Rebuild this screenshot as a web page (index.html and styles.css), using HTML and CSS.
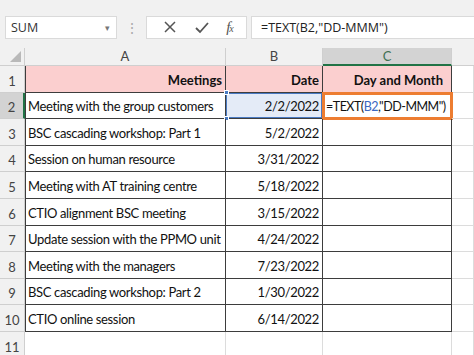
FILE: index.html
```html
<!DOCTYPE html>
<html lang="en">
<head>
  <meta charset="UTF-8">
  <title>TEXT function – Day and Month</title>
  <link rel="stylesheet" href="styles.css">
</head>
<body>
  <div class="toolbar">
    <div class="name-box">
      <span>SUM</span>
      <span class="caret">&#9662;</span>
    </div>
    <div class="grip">&#8942;</div>
    <div class="fx-box">
      <svg class="ico" width="14" height="14" viewBox="0 0 14 14"><path d="M2 2 L12 12 M12 2 L2 12" stroke="#555" stroke-width="1.5" fill="none"/></svg>
      <svg class="ico" width="16" height="14" viewBox="0 0 16 14"><path d="M2 8 L6 12 L14 3" stroke="#555" stroke-width="1.8" fill="none"/></svg>
      <span class="fx">f<sub>x</sub></span>
    </div>
    <div class="formula">=TEXT(B2,"DD-MMM")</div>
  </div>

  <div class="sheet">
    <div class="corner"><span class="tri"></span></div>
    <div class="col-head">A</div>
    <div class="col-head">B</div>
    <div class="col-head sel">C</div>
    <div class="col-head last"></div>

    <div class="row-head">1</div>
    <div class="cell t a pink right bold">Meetings</div>
    <div class="cell t pink right bold">Date</div>
    <div class="cell t pink right bold pad">Day and Month</div>
    <div class="cell"></div>

    <div class="row-head sel">2</div>
    <div class="cell t a">Meeting with the group customers</div>
    <div class="cell t right picked">2/2/2022<i class="dot tl"></i><i class="dot bl"></i></div>
    <div class="cell t editing">=TEXT(<span class="ref">B2</span>,"DD-MMM")</div>
    <div class="cell"></div>

    <div class="row-head">3</div>
    <div class="cell t a">BSC cascading workshop: Part 1</div>
    <div class="cell t right">5/2/2022</div>
    <div class="cell t"></div>
    <div class="cell"></div>

    <div class="row-head">4</div>
    <div class="cell t a">Session on human resource</div>
    <div class="cell t right">3/31/2022</div>
    <div class="cell t"></div>
    <div class="cell"></div>

    <div class="row-head">5</div>
    <div class="cell t a">Meeting with AT training centre</div>
    <div class="cell t right">5/18/2022</div>
    <div class="cell t"></div>
    <div class="cell"></div>

    <div class="row-head">6</div>
    <div class="cell t a">CTIO alignment BSC meeting</div>
    <div class="cell t right">3/15/2022</div>
    <div class="cell t"></div>
    <div class="cell"></div>

    <div class="row-head">7</div>
    <div class="cell t a">Update session with the PPMO unit</div>
    <div class="cell t right">4/24/2022</div>
    <div class="cell t"></div>
    <div class="cell"></div>

    <div class="row-head">8</div>
    <div class="cell t a">Meeting with the managers</div>
    <div class="cell t right">7/23/2022</div>
    <div class="cell t"></div>
    <div class="cell"></div>

    <div class="row-head">9</div>
    <div class="cell t a">BSC cascading workshop: Part 2</div>
    <div class="cell t right">1/30/2022</div>
    <div class="cell t"></div>
    <div class="cell"></div>

    <div class="row-head">10</div>
    <div class="cell t a">CTIO online session</div>
    <div class="cell t right">6/14/2022</div>
    <div class="cell t"></div>
    <div class="cell"></div>

    <div class="row-head">11</div>
    <div class="cell"></div>
    <div class="cell"></div>
    <div class="cell"></div>
    <div class="cell"></div>
  </div>
</body>
</html>
```

FILE: styles.css
```css
:root {
  --grid: #dcdcdc;
  --line: #3d3d3d;
  --green: #217346;
  --pink: #fbcfcf;
  --orange: #ed7d31;
  --blue: #4a7ac2;
}

* {
  box-sizing: border-box;
}

html, body {
  margin: 0;
  height: 100%;
  overflow: hidden;
  background: #fff;
}

body {
  font-family: "Lato", sans-serif;
  color: #111;
}

/* Formula bar */
.toolbar {
  display: flex;
  align-items: center;
  height: 48px;
  padding: 6px 0 0 5px;
  background: #f1f1f1;
  font-family: "Open Sans", sans-serif;
  font-size: 12.5px;
  color: #333;
}

.name-box {
  display: flex;
  align-items: center;
  justify-content: space-between;
  width: 112px;
  height: 23px;
  padding: 0 6px 0 5px;
  background: #fff;
  border: 1px solid #dadada;
}

.caret {
  font-size: 9px;
  color: #777;
}

.grip {
  width: 29px;
  text-align: center;
  color: #aaa;
  font-size: 14px;
}

.fx-box {
  display: flex;
  align-items: center;
  justify-content: space-around;
  width: 101px;
  height: 23px;
  padding: 0 4px 0 8px;
  background: #fff;
  border: 1px solid #dadada;
}

.fx {
  font-family: "Liberation Serif", serif;
  font-style: italic;
  font-size: 15px;
  color: #555;
}

.fx sub {
  font-size: 10px;
  vertical-align: 0;
  margin-left: -1px;
}

.formula {
  flex: 1;
  height: 23px;
  margin-left: 4px;
  padding: 0 9px;
  line-height: 21px;
  background: #fff;
  border: 1px solid #dadada;
  border-right: none;
  color: #222;
}

/* Sheet */
.sheet {
  display: grid;
  grid-template-columns: 25px 201px 97px 129px 1fr;
  grid-template-rows: 18px repeat(11, 26.6px);
  font-size: 13px;
}

.corner,
.col-head,
.row-head {
  background: #f1f1f1;
  color: #444;
  border-right: 1px solid #cfcfcf;
  border-bottom: 1px solid #cfcfcf;
}

.corner {
  position: relative;
}

.tri {
  position: absolute;
  right: 3px;
  bottom: 3px;
  width: 0;
  height: 0;
  border-left: 11px solid transparent;
  border-bottom: 11px solid #b9b9b9;
}

.col-head {
  text-align: center;
  line-height: 17px;
}

.col-head.last {
  border-right: none;
}

.col-head.sel {
  background: #d3d3d3;
  color: #3f6f52;
  border-bottom: 2px solid var(--green);
}

.row-head {
  display: flex;
  align-items: flex-end;
  justify-content: center;
  padding-bottom: 3px;
}

.row-head.sel {
  background: #d3d3d3;
  border-right: 2px solid var(--green);
}

.cell {
  position: relative;
  display: flex;
  align-items: flex-end;
  padding: 0 3px 4px;
  white-space: nowrap;
  letter-spacing: -0.35px;
  border-right: 1px solid var(--grid);
  border-bottom: 1px solid var(--grid);
}

.cell.t {
  border-right-color: var(--line);
  border-bottom-color: var(--line);
}

.cell.a {
  box-shadow: inset 1px 0 0 var(--line);
}

.pink {
  background: var(--pink);
}

.bold {
  font-weight: bold;
  letter-spacing: 0;
}

.right {
  justify-content: flex-end;
}

.pad {
  padding-right: 8px;
}

.picked {
  background: #e4ebf7;
  box-shadow: inset 0 0 0 1px var(--blue);
}

.dot {
  position: absolute;
  left: -2px;
  width: 5px;
  height: 5px;
  background: var(--blue);
  border: 1px solid #fff;
}

.dot.tl {
  top: -3px;
}

.dot.bl {
  bottom: -3px;
}

.editing {
  padding-left: 3px;
  font-size: 12.5px;
  letter-spacing: -0.5px;
}

.editing::after {
  content: "";
  position: absolute;
  top: -1px;
  left: -1px;
  right: -2px;
  bottom: -2px;
  border: 3px solid var(--orange);
}

.ref {
  color: #3b68c0;
}
```
